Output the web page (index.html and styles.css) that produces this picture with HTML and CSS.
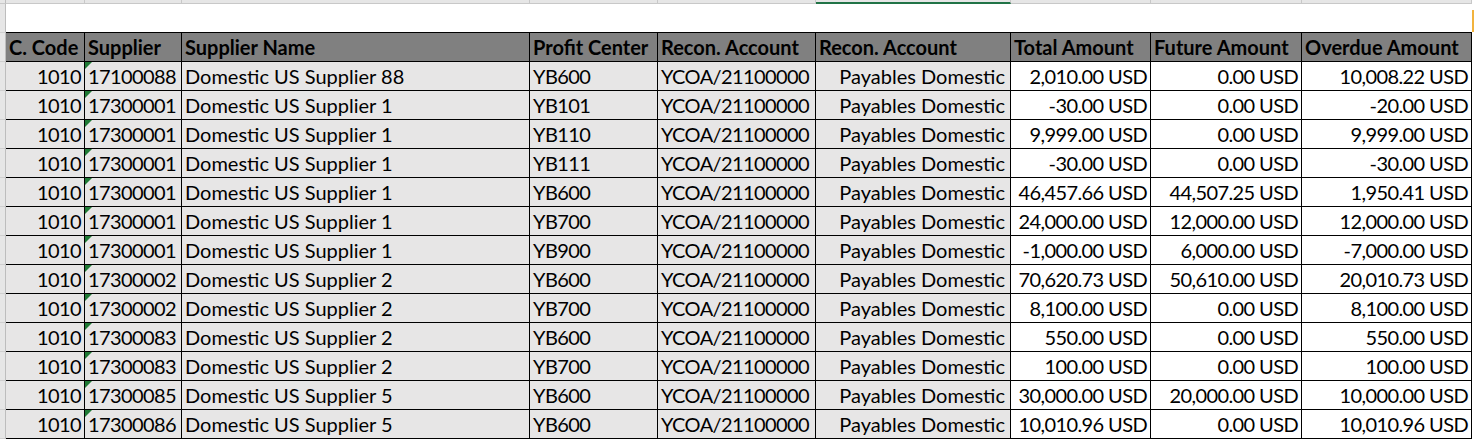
FILE: index.html
```html
<!DOCTYPE html>
<html lang="en">
<head>
<meta charset="utf-8">
<title>Supplier balances</title>
<link rel="stylesheet" href="styles.css">
</head>
<body>
<div class="sheet">
  <div class="ch corner"></div>
  <div class="ch"></div><div class="ch"></div><div class="ch"></div><div class="ch"></div><div class="ch"></div>
  <div class="ch sel"></div><div class="ch"></div><div class="ch"></div><div class="ch"></div>

  <div class="rh"></div>
  <div class="blank"></div>

  <div class="rh"></div>
  <div class="hd">C. Code</div><div class="hd">Supplier</div><div class="hd">Supplier Name</div><div class="hd">Profit Center</div><div class="hd">Recon. Account</div><div class="hd">Recon. Account</div><div class="hd">Total Amount</div><div class="hd">Future Amount</div><div class="hd">Overdue Amount</div>

  <div class="rh"></div>
  <div class="c g r">1010</div><div class="c g tri">17100088</div><div class="c g t">Domestic US Supplier 88</div><div class="c g">YB600</div><div class="c g">YCOA/21100000</div><div class="c g r t">Payables Domestic</div><div class="c r">2,010.00 USD</div><div class="c r">0.00 USD</div><div class="c r">10,008.22 USD</div>

  <div class="rh"></div>
  <div class="c g r">1010</div><div class="c g tri">17300001</div><div class="c g t">Domestic US Supplier 1</div><div class="c g">YB101</div><div class="c g">YCOA/21100000</div><div class="c g r t">Payables Domestic</div><div class="c r">-30.00 USD</div><div class="c r">0.00 USD</div><div class="c r">-20.00 USD</div>

  <div class="rh"></div>
  <div class="c g r">1010</div><div class="c g tri">17300001</div><div class="c g t">Domestic US Supplier 1</div><div class="c g">YB110</div><div class="c g">YCOA/21100000</div><div class="c g r t">Payables Domestic</div><div class="c r">9,999.00 USD</div><div class="c r">0.00 USD</div><div class="c r">9,999.00 USD</div>

  <div class="rh"></div>
  <div class="c g r">1010</div><div class="c g tri">17300001</div><div class="c g t">Domestic US Supplier 1</div><div class="c g">YB111</div><div class="c g">YCOA/21100000</div><div class="c g r t">Payables Domestic</div><div class="c r">-30.00 USD</div><div class="c r">0.00 USD</div><div class="c r">-30.00 USD</div>

  <div class="rh"></div>
  <div class="c g r">1010</div><div class="c g tri">17300001</div><div class="c g t">Domestic US Supplier 1</div><div class="c g">YB600</div><div class="c g">YCOA/21100000</div><div class="c g r t">Payables Domestic</div><div class="c r">46,457.66 USD</div><div class="c r">44,507.25 USD</div><div class="c r">1,950.41 USD</div>

  <div class="rh"></div>
  <div class="c g r">1010</div><div class="c g tri">17300001</div><div class="c g t">Domestic US Supplier 1</div><div class="c g">YB700</div><div class="c g">YCOA/21100000</div><div class="c g r t">Payables Domestic</div><div class="c r">24,000.00 USD</div><div class="c r">12,000.00 USD</div><div class="c r">12,000.00 USD</div>

  <div class="rh"></div>
  <div class="c g r">1010</div><div class="c g tri">17300001</div><div class="c g t">Domestic US Supplier 1</div><div class="c g">YB900</div><div class="c g">YCOA/21100000</div><div class="c g r t">Payables Domestic</div><div class="c r">-1,000.00 USD</div><div class="c r">6,000.00 USD</div><div class="c r">-7,000.00 USD</div>

  <div class="rh"></div>
  <div class="c g r">1010</div><div class="c g tri">17300002</div><div class="c g t">Domestic US Supplier 2</div><div class="c g">YB600</div><div class="c g">YCOA/21100000</div><div class="c g r t">Payables Domestic</div><div class="c r">70,620.73 USD</div><div class="c r">50,610.00 USD</div><div class="c r">20,010.73 USD</div>

  <div class="rh"></div>
  <div class="c g r">1010</div><div class="c g tri">17300002</div><div class="c g t">Domestic US Supplier 2</div><div class="c g">YB700</div><div class="c g">YCOA/21100000</div><div class="c g r t">Payables Domestic</div><div class="c r">8,100.00 USD</div><div class="c r">0.00 USD</div><div class="c r">8,100.00 USD</div>

  <div class="rh"></div>
  <div class="c g r">1010</div><div class="c g tri">17300083</div><div class="c g t">Domestic US Supplier 2</div><div class="c g">YB600</div><div class="c g">YCOA/21100000</div><div class="c g r t">Payables Domestic</div><div class="c r">550.00 USD</div><div class="c r">0.00 USD</div><div class="c r">550.00 USD</div>

  <div class="rh"></div>
  <div class="c g r">1010</div><div class="c g tri">17300083</div><div class="c g t">Domestic US Supplier 2</div><div class="c g">YB700</div><div class="c g">YCOA/21100000</div><div class="c g r t">Payables Domestic</div><div class="c r">100.00 USD</div><div class="c r">0.00 USD</div><div class="c r">100.00 USD</div>

  <div class="rh"></div>
  <div class="c g r">1010</div><div class="c g tri">17300085</div><div class="c g t">Domestic US Supplier 5</div><div class="c g">YB600</div><div class="c g">YCOA/21100000</div><div class="c g r t">Payables Domestic</div><div class="c r">30,000.00 USD</div><div class="c r">20,000.00 USD</div><div class="c r">10,000.00 USD</div>

  <div class="rh"></div>
  <div class="c g r">1010</div><div class="c g tri">17300086</div><div class="c g t">Domestic US Supplier 5</div><div class="c g">YB600</div><div class="c g">YCOA/21100000</div><div class="c g r t">Payables Domestic</div><div class="c r">10,010.96 USD</div><div class="c r">0.00 USD</div><div class="c r">10,010.96 USD</div>
</div>
</body>
</html>
```

FILE: styles.css
```css
html, body {
  margin: 0;
  padding: 0;
  background: #ffffff;
}

body {
  font-family: Lato, "Open Sans", sans-serif;
  font-size: 20px;
  color: #000000;
}

.sheet {
  display: grid;
  grid-template-columns: 6px 79px 97px 348px 128px 158px 195px 140px 151px 170px;
  grid-template-rows: 4px 29px 29px repeat(13, 29px);
  width: 1472px;
}

.sheet > div {
  box-sizing: border-box;
  min-width: 0;
}

/* Column-header strip at the very top */
.ch {
  background: #e6e6e6;
  border-right: 1px solid #c8c8c8;
  border-bottom: 1px solid #c8c8c8;
}

.ch.corner {
  border-right: 1px solid #bdbdbd;
}

.ch.sel {
  border-bottom: 2px solid #217346;
}

/* Row-header strip on the left */
.rh {
  background: #e6e6e6;
  border-right: 1px solid #bdbdbd;
  border-bottom: 1px solid #cfcfcf;
}

.blank {
  grid-column: 2 / span 9;
  background: #ffffff;
  border-bottom: 1px solid #000000;
  position: relative;
}

.blank::after {
  content: "";
  position: absolute;
  right: -2px;
  top: 6px;
  bottom: 0;
  width: 2px;
  background: #f2b33d;
}

.hd {
  background: #808080;
  font-weight: 700;
  border-right: 1px solid #000000;
  border-bottom: 1px solid #000000;
  padding: 0 3px;
  display: flex;
  align-items: center;
  white-space: nowrap;
  overflow: hidden;
}

.c {
  background: #ffffff;
  border-right: 1px solid #000000;
  border-bottom: 1px solid #000000;
  padding: 0 3px 0 3px;
  display: flex;
  align-items: center;
  white-space: nowrap;
  overflow: hidden;
  position: relative;
  letter-spacing: -0.6px;
}

.c.t {
  letter-spacing: 0;
}

.c.g {
  background: #e7e6e6;
}

.c.r {
  justify-content: flex-end;
}

.c.t.r {
  padding-right: 5px;
}

.c.tri::before {
  content: "";
  position: absolute;
  top: 0;
  left: 0;
  width: 0;
  height: 0;
  border-top: 7px solid #1f7a35;
  border-right: 7px solid transparent;
}
```
